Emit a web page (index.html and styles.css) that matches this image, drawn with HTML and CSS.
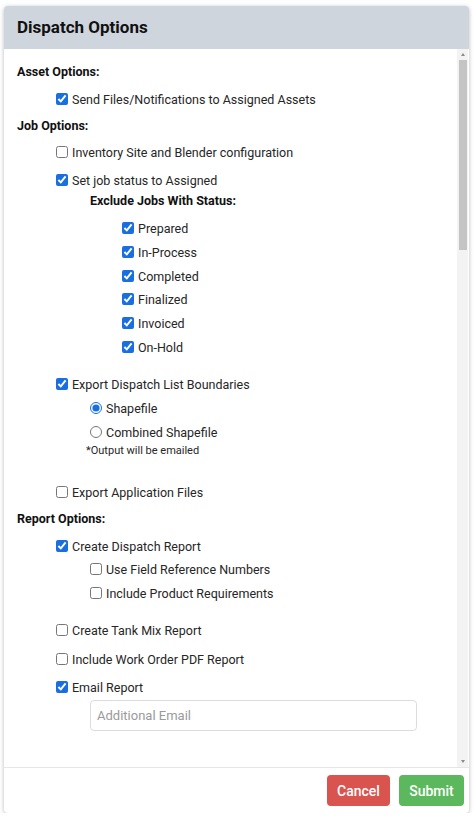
FILE: index.html
```html
<!DOCTYPE html>
<html>
<head>
<meta charset="utf-8">
<link rel="stylesheet" href="styles.css">
</head>
<body>
<div class="modal">
  <div class="header"><h2 class="title">Dispatch Options</h2></div>
  <div class="body-wrap">
    <div class="content">
      <div class="row section mt12">Asset Options:</div>
      <label class="row l1 mt8"><input type="checkbox" checked><span>Send Files/Notifications to Assigned Assets</span></label>
      <div class="row section mt6">Job Options:</div>
      <label class="row l1 mt7"><input type="checkbox"><span>Inventory Site and Blender configuration</span></label>
      <label class="row l1 mt8"><input type="checkbox" checked><span>Set job status to Assigned</span></label>
      <div class="row sub l2">Exclude Jobs With Status:</div>
      <label class="row l3 mt8"><input type="checkbox" checked><span>Prepared</span></label>
      <label class="row l3 mt4"><input type="checkbox" checked><span>In-Process</span></label>
      <label class="row l3 mt4"><input type="checkbox" checked><span>Completed</span></label>
      <label class="row l3 mt3"><input type="checkbox" checked><span>Finalized</span></label>
      <label class="row l3 mt4"><input type="checkbox" checked><span>Invoiced</span></label>
      <label class="row l3 mt4"><input type="checkbox" checked><span>On-Hold</span></label>
      <label class="row l1 mt17"><input type="checkbox" checked><span>Export Dispatch List Boundaries</span></label>
      <label class="row l2 mt4"><input type="radio" name="shp" checked><span>Shapefile</span></label>
      <label class="row l2 mt4"><input type="radio" name="shp"><span>Combined Shapefile</span></label>
      <div class="note">*Output will be emailed</div>
      <label class="row l1 mt23"><input type="checkbox"><span>Export Application Files</span></label>
      <div class="row section mt6">Report Options:</div>
      <label class="row l1 mt8"><input type="checkbox" checked><span>Create Dispatch Report</span></label>
      <label class="row l2 mt3"><input type="checkbox"><span>Use Field Reference Numbers</span></label>
      <label class="row l2 mt4"><input type="checkbox"><span>Include Product Requirements</span></label>
      <label class="row l1 mt17"><input type="checkbox"><span>Create Tank Mix Report</span></label>
      <label class="row l1 mt9"><input type="checkbox"><span>Include Work Order PDF Report</span></label>
      <label class="row l1 mt8"><input type="checkbox" checked><span>Email Report</span></label>
      <input class="email" type="text" placeholder="Additional Email">
    </div>
    <div class="scrollbar">
      <div class="arrow up"></div>
      <div class="thumb"></div>
      <div class="track-rest"></div>
      <div class="arrow down"></div>
    </div>
  </div>
  <div class="footer">
    <button class="btn cancel">Cancel</button>
    <button class="btn submit">Submit</button>
  </div>
</div>
</body>
</html>
```
FILE: styles.css
```css
* { box-sizing: border-box; }
html, body { margin: 0; padding: 0; background: #fff; }
body {
  font-family: Roboto, "Liberation Sans", Arial, sans-serif;
  color: #262626;
  font-size: 12.5px;
  padding: 6px 4px 0 4px;
}
.modal {
  width: 465px;
  height: 807px;
  display: flex;
  flex-direction: column;
  background: #fff;
  border-radius: 4px;
  box-shadow: 0 1px 4px rgba(0,0,0,0.28);
  overflow: hidden;
}
.header {
  height: 43px;
  flex: none;
  background: #cfd5dc;
  display: flex;
  align-items: center;
  padding-left: 13px;
}
.title {
  margin: 0;
  font-size: 17px;
  font-weight: 700;
  color: #111;
  position: relative;
  top: -1px;
}
.body-wrap {
  flex: none;
  height: 718px;
  display: flex;
}
.content {
  flex: 1;
  padding-left: 13px;
  display: flex;
  flex-direction: column;
  align-items: flex-start;
}
.row {
  height: 20px;
  display: flex;
  align-items: center;
  white-space: nowrap;
}
.section { font-weight: 700; color: #111; }
.sub { font-weight: 700; color: #111; }
.l1 { padding-left: 39px; }
.l2 { padding-left: 73px; }
.l3 { padding-left: 105px; }
.row input {
  margin: 0 4px 0 0;
  width: 12px;
  height: 12px;
  accent-color: #1a6fe0;
  flex: none;
}
.note {
  margin-top: 1px;
  height: 16px;
  line-height: 16px;
  padding-left: 69px;
  font-size: 11px;
}
.email {
  margin: 3px 0 0 73px;
  width: 327px;
  height: 31px;
  border: 1px solid #dcdcdc;
  border-radius: 4px;
  padding: 0 6px;
  font-family: Roboto, "Liberation Sans", Arial, sans-serif;
  font-size: 13px;
  color: #222;
  outline: none;
}
.email::placeholder { color: #9a9a9a; }
.mt3 { margin-top: 3px; }
.mt4 { margin-top: 4px; }
.mt6 { margin-top: 6px; }
.mt7 { margin-top: 7px; }
.mt8 { margin-top: 8px; }
.mt9 { margin-top: 9px; }
.mt12 { margin-top: 12px; }
.mt17 { margin-top: 17px; }
.mt23 { margin-top: 23px; }

.scrollbar {
  flex: none;
  width: 11px;
  margin-right: 1px;
  background: #f3f3f3;
  display: flex;
  flex-direction: column;
  align-items: center;
}
.arrow {
  flex: none;
  height: 11px;
  width: 100%;
  display: flex;
  align-items: center;
  justify-content: center;
}
.arrow.up::before {
  content: "";
  border-left: 2.5px solid transparent;
  border-right: 2.5px solid transparent;
  border-bottom: 3px solid #8a8a8a;
}
.arrow.down::before {
  content: "";
  border-left: 2.5px solid transparent;
  border-right: 2.5px solid transparent;
  border-top: 3px solid #8a8a8a;
}
.thumb {
  flex: none;
  width: 8px;
  height: 190px;
  margin-left: 1px;
  background: #c4c4c4;
}
.track-rest { flex: 1; }

.footer {
  flex: 1;
  border-top: 1px solid #e6e6e6;
  display: flex;
  justify-content: flex-end;
  align-items: flex-start;
  padding: 7px 5px 0 0;
  gap: 9px;
}
.btn {
  height: 31px;
  border: none;
  border-radius: 4px;
  color: #fff;
  font-family: Roboto, "Liberation Sans", Arial, sans-serif;
  font-size: 14px;
  font-weight: 500;
  padding: 0;
}
.cancel { width: 63px; background: #d9534f; }
.submit { width: 65px; background: #5cb85c; }
```
